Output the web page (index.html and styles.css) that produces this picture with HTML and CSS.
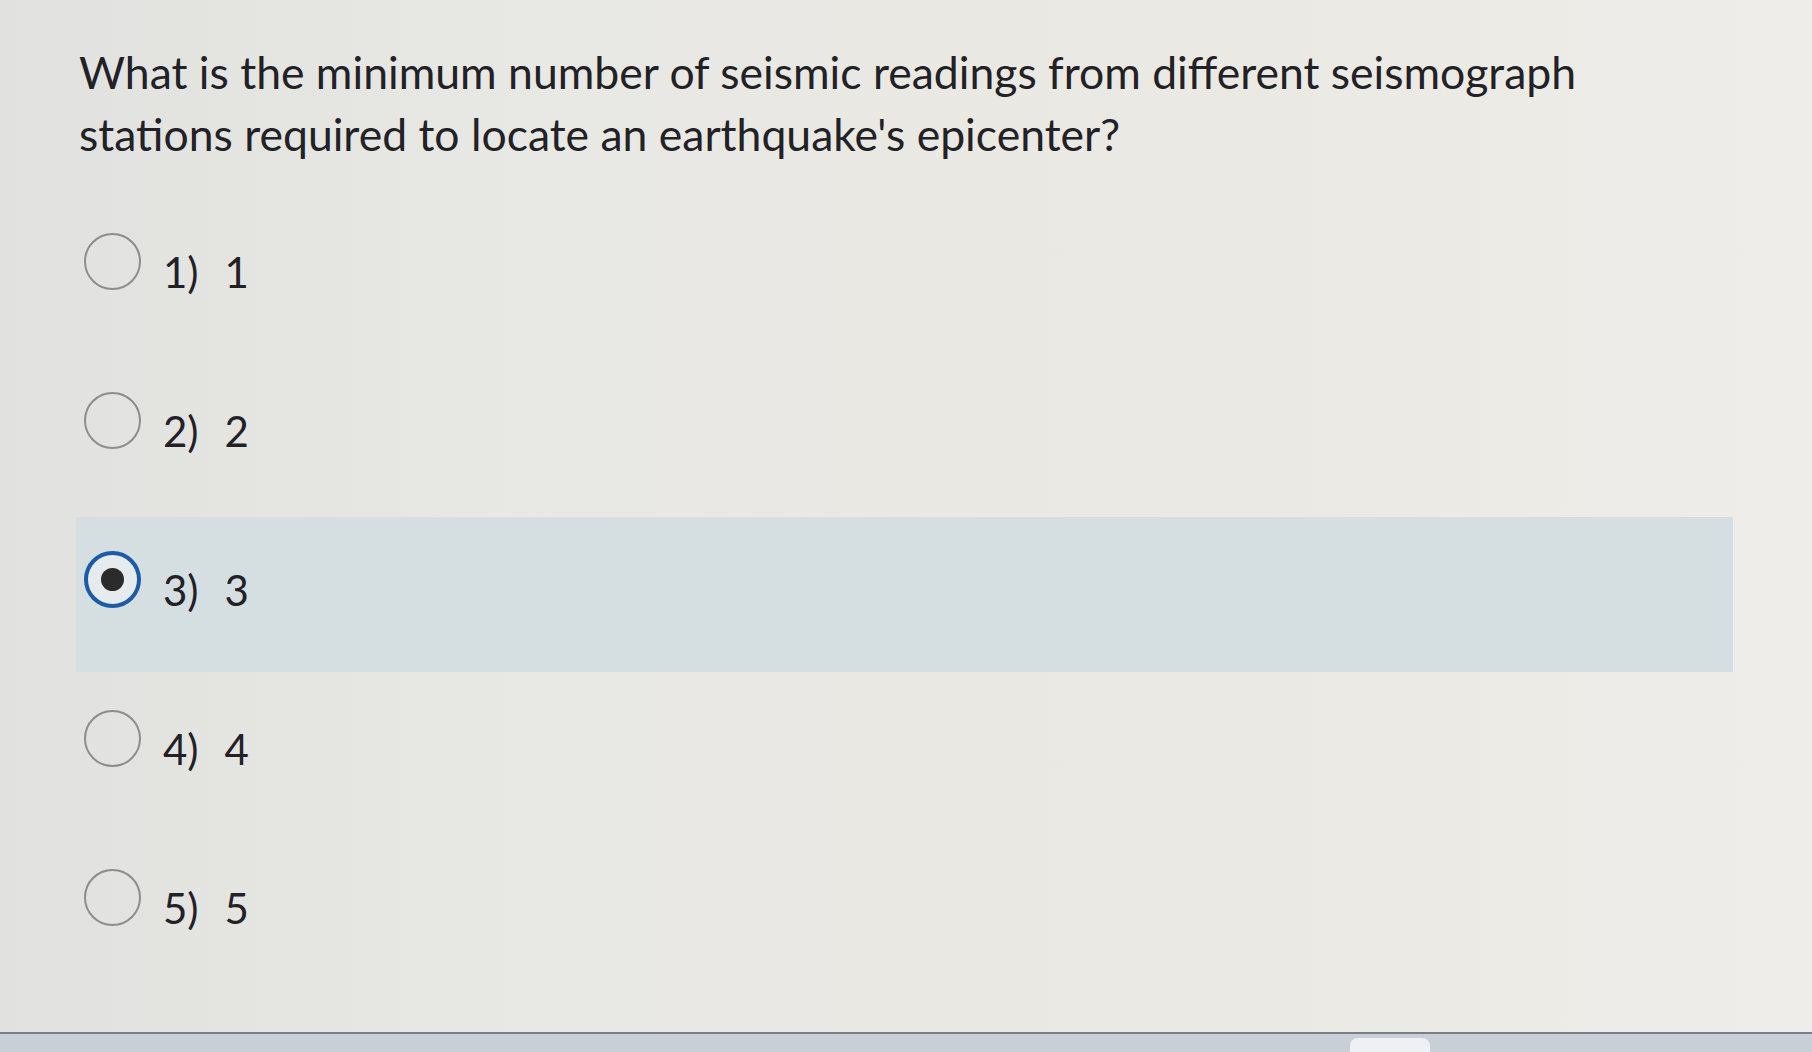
FILE: index.html
```html
<!DOCTYPE html>
<html lang="en">
<head>
<meta charset="utf-8">
<title>Question</title>
<link rel="stylesheet" href="styles.css">
</head>
<body>
<div class="screen">
  <main class="content">
    <p class="question">What is the minimum number of seismic readings from different seismograph stations required to locate an earthquake's epicenter?</p>
    <ul class="options">
      <li class="option">
        <span class="radio"></span>
        <span class="label"><span class="num">1)</span><span class="val">1</span></span>
      </li>
      <li class="option">
        <span class="radio"></span>
        <span class="label"><span class="num">2)</span><span class="val">2</span></span>
      </li>
      <li class="option selected">
        <span class="radio checked"><span class="dot"></span></span>
        <span class="label"><span class="num">3)</span><span class="val">3</span></span>
      </li>
      <li class="option">
        <span class="radio"></span>
        <span class="label"><span class="num">4)</span><span class="val">4</span></span>
      </li>
      <li class="option">
        <span class="radio"></span>
        <span class="label"><span class="num">5)</span><span class="val">5</span></span>
      </li>
    </ul>
  </main>
  <footer class="footer">
    <span class="footer-btn"></span>
  </footer>
</div>
</body>
</html>
```
FILE: styles.css
```css
html, body {
  margin: 0;
  padding: 0;
  height: 100%;
  overflow: hidden;
}

body {
  font-family: Lato, "Open Sans", "Liberation Sans", sans-serif;
  color: #222126;
  background: linear-gradient(90deg, #e1e2df 0%, #e8e8e4 30%, #ebe9e3 70%, #eeede9 100%);
}

.screen {
  height: 100%;
  display: flex;
  flex-direction: column;
}

.content {
  flex: 1;
  padding: 41px 79px 0 76px;
}

.question {
  margin: 0 0 34px 3px;
  font-size: 44.5px;
  line-height: 62px;
  max-width: 1560px;
}

.options {
  list-style: none;
  margin: 0;
  padding: 0;
}

.option {
  height: 155px;
  margin-bottom: 4px;
  box-sizing: border-box;
  padding: 34px 0 0 8px;
  display: flex;
  align-items: flex-start;
}

.option.selected {
  background: #d5dfe2;
}

.radio {
  width: 57px;
  height: 57px;
  box-sizing: border-box;
  border-radius: 50%;
  border: 2px solid #8d8c8e;
  flex: none;
  display: flex;
  align-items: center;
  justify-content: center;
}

.radio.checked {
  border: 4px solid #1e5ba6;
  background: #e6ecee;
}

.dot {
  width: 23px;
  height: 23px;
  border-radius: 50%;
  background: #2b2b2c;
}

.label {
  margin: 14px 0 0 22px;
  font-size: 42px;
  line-height: 50px;
  display: flex;
}

.val {
  margin-left: 26px;
}

.footer {
  height: 18px;
  flex: none;
  border-top: 2px solid #7b7e86;
  background: #c9cfd7;
  position: relative;
  overflow: hidden;
}

.footer-btn {
  position: absolute;
  left: 1350px;
  top: 4px;
  width: 80px;
  height: 30px;
  border-radius: 8px;
  background: #eef0f3;
}
```
